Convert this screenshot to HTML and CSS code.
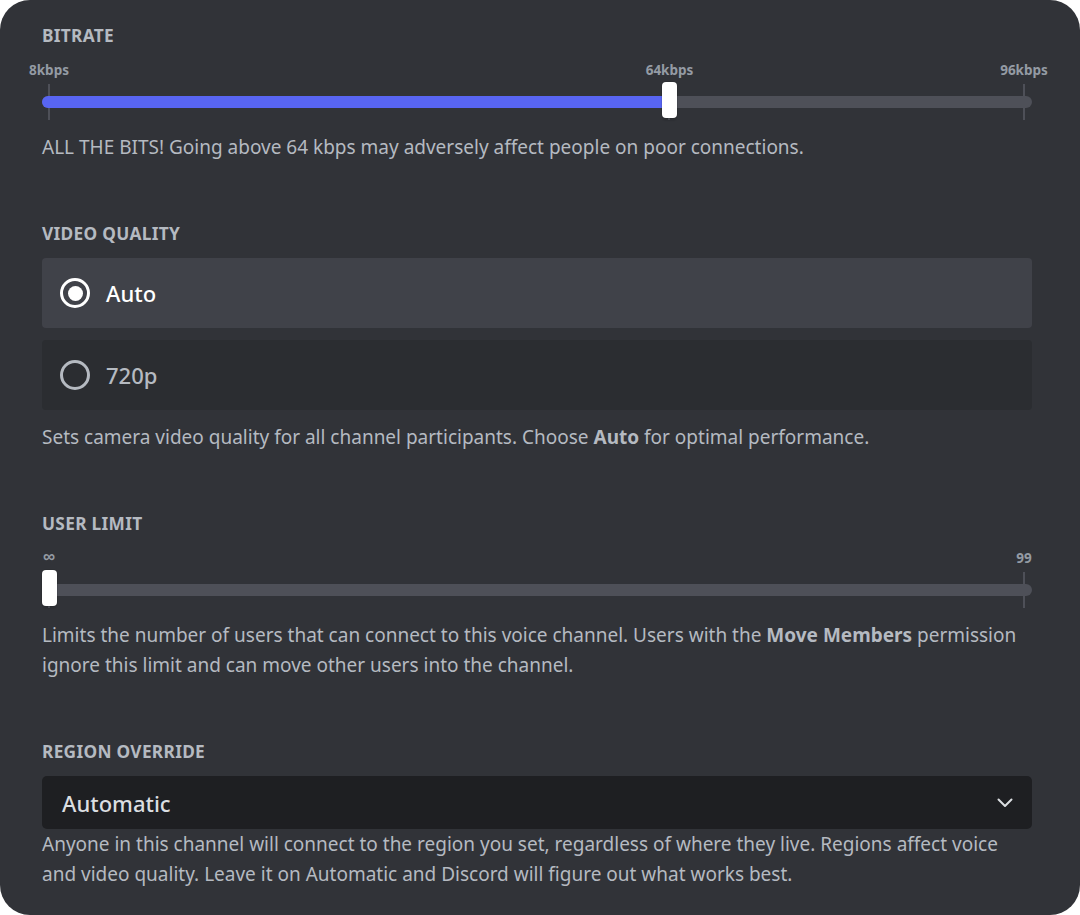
FILE: index.html
```html
<!DOCTYPE html>
<html lang="en">
<head>
<meta charset="utf-8">
<title>Voice Channel Settings</title>
<link rel="stylesheet" href="styles.css">
</head>
<body>
<main class="panel">

  <section class="field">
    <h2 class="field-title">Bitrate</h2>
    <div class="slider">
      <div class="slider-track">
        <div class="slider-fill" style="--value: 0.6364"></div>
      </div>
      <div class="slider-marks">
        <div class="mark" style="--pos: 0"><span class="mark-label">8kbps</span><span class="mark-tick"></span></div>
        <div class="mark" style="--pos: 0.6364"><span class="mark-label">64kbps</span><span class="mark-tick"></span></div>
        <div class="mark" style="--pos: 1"><span class="mark-label">96kbps</span><span class="mark-tick"></span></div>
        <div class="slider-grabber" style="--pos: 0.6364"></div>
      </div>
    </div>
    <p class="field-note">ALL THE BITS! Going above 64 kbps may adversely affect people on poor connections.</p>
  </section>

  <section class="field">
    <h2 class="field-title">Video Quality</h2>
    <div class="radio-group">
      <div class="radio-option is-selected">
        <span class="radio-circle"><span class="radio-dot"></span></span>
        <span class="radio-label">Auto</span>
      </div>
      <div class="radio-option">
        <span class="radio-circle"></span>
        <span class="radio-label">720p</span>
      </div>
    </div>
    <p class="field-note note-spaced">Sets camera video quality for all channel participants. Choose <strong>Auto</strong> for optimal performance.</p>
  </section>

  <section class="field">
    <h2 class="field-title">User Limit</h2>
    <div class="slider">
      <div class="slider-track">
        <div class="slider-fill" style="--value: 0"></div>
      </div>
      <div class="slider-marks">
        <div class="mark" style="--pos: 0"><span class="mark-label mark-label-symbol">∞</span><span class="mark-tick"></span></div>
        <div class="mark" style="--pos: 1"><span class="mark-label">99</span><span class="mark-tick"></span></div>
        <div class="slider-grabber" style="--pos: 0"></div>
      </div>
    </div>
    <p class="field-note">Limits the number of users that can connect to this voice channel. Users with the <strong>Move Members</strong> permission ignore this limit and can move other users into the channel.</p>
  </section>

  <section class="field">
    <h2 class="field-title">Region Override</h2>
    <div class="select">
      <span class="select-value">Automatic</span>
      <svg class="select-chevron" width="16" height="10" viewBox="0 0 16 10" aria-hidden="true">
        <polyline points="1.5,1.5 8,8 14.5,1.5" fill="none" stroke="currentColor" stroke-width="2" stroke-linecap="round" stroke-linejoin="round"/>
      </svg>
    </div>
    <p class="field-note">Anyone in this channel will connect to the region you set, regardless of where they live. Regions affect voice and video quality. Leave it on Automatic and Discord will figure out what works best.</p>
  </section>

</main>
</body>
</html>
```

FILE: styles.css
```css
* {
  box-sizing: border-box;
}

html,
body {
  margin: 0;
  padding: 0;
  background: #ffffff;
}

body {
  font-family: "Noto Sans", "Liberation Sans", sans-serif;
}

.panel {
  width: 1080px;
  height: 915px;
  background: #313338;
  border-radius: 30px;
  padding: 26px 48px 0 42px;
  overflow: hidden;
}

.field + .field {
  margin-top: 62px;
}

.field-title {
  margin: 0;
  font-size: 17.3px;
  line-height: 20px;
  font-weight: 700;
  letter-spacing: 0.3px;
  text-transform: uppercase;
  color: #b5bac1;
}

.field-note {
  margin: 0;
  font-size: 19px;
  line-height: 30px;
  color: #b5bac1;
}

.field-note strong {
  font-weight: 700;
}

.note-spaced {
  margin-top: 12px;
}

/* ---------- slider ---------- */

.slider {
  position: relative;
  height: 86px;
  padding-top: 50px;
}

.slider-track {
  position: relative;
  z-index: 1;
  height: 12px;
  border-radius: 6px;
  background: #4e5058;
}

.slider-fill {
  height: 100%;
  border-radius: 6px;
  background: #5865f2;
  width: calc(7px + (100% - 15px) * var(--value));
}

.slider-marks {
  position: absolute;
  top: 0;
  bottom: 0;
  left: 7px;
  right: 8px;
}

.mark {
  position: absolute;
  top: 0;
  left: calc(var(--pos) * 100%);
  width: 0;
}

.mark-label {
  position: absolute;
  top: 15px;
  left: 0;
  transform: translateX(-50%);
  white-space: nowrap;
  font-size: 13.5px;
  line-height: 18px;
  font-weight: 700;
  color: #949ba4;
}

.mark-label-symbol {
  font-size: 17px;
  top: 13px;
}

.mark-tick {
  position: absolute;
  top: 38px;
  left: -1px;
  width: 2px;
  height: 36px;
  background: #4e5058;
}

.slider-grabber {
  position: absolute;
  z-index: 2;
  top: 36px;
  left: calc(var(--pos) * 100%);
  width: 15px;
  height: 36px;
  margin-left: -7px;
  border-radius: 4px;
  background: #ffffff;
  box-shadow: 0 0 0 1px rgba(0, 0, 0, 0.08), 0 3px 1px rgba(0, 0, 0, 0.08);
}

/* ---------- radio group ---------- */

.radio-group {
  display: flex;
  flex-direction: column;
  gap: 12px;
  margin-top: 14px;
}

.radio-option {
  display: flex;
  align-items: center;
  gap: 16px;
  height: 70px;
  padding-left: 18px;
  border-radius: 4px;
  background: #2b2d31;
}

.radio-option.is-selected {
  background: #404249;
}

.radio-circle {
  display: flex;
  align-items: center;
  justify-content: center;
  width: 30px;
  height: 30px;
  border-radius: 50%;
  border: 3px solid #b5bac1;
}

.is-selected .radio-circle {
  border-color: #ffffff;
}

.radio-dot {
  width: 15px;
  height: 15px;
  border-radius: 50%;
  background: #ffffff;
}

.radio-label {
  font-size: 22px;
  font-weight: 500;
  color: #b5bac1;
}

.is-selected .radio-label {
  color: #ffffff;
}

/* ---------- select ---------- */

.select {
  display: flex;
  align-items: center;
  justify-content: space-between;
  height: 53px;
  margin-top: 14px;
  padding: 0 19px 0 20px;
  border-radius: 5px;
  background: #1e1f22;
}

.select-value {
  font-size: 22px;
  font-weight: 500;
  color: #dbdee1;
}

.select-chevron {
  color: #dbdee1;
}
```
